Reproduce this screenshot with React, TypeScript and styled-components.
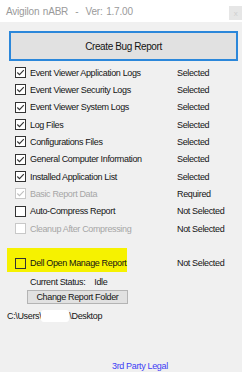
import React from "react";
import styled, { createGlobalStyle } from "styled-components";

const GlobalStyle = createGlobalStyle`
  html, body {
    margin: 0;
    padding: 0;
    background: #ffffff;
  }
  * {
    box-sizing: border-box;
  }
`;

type Item = {
  label: string;
  status: string;
  checked: boolean;
  disabled?: boolean;
};

const items: Item[] = [
  { label: "Event Viewer Application Logs", status: "Selected", checked: true },
  { label: "Event Viewer Security Logs", status: "Selected", checked: true },
  { label: "Event Viewer System Logs", status: "Selected", checked: true },
  { label: "Log Files", status: "Selected", checked: true },
  { label: "Configurations Files", status: "Selected", checked: true },
  { label: "General Computer Information", status: "Selected", checked: true },
  { label: "Installed Application List", status: "Selected", checked: true },
  { label: "Basic Report Data", status: "Required", checked: true, disabled: true },
  { label: "Auto-Compress Report", status: "Not Selected", checked: false },
  { label: "Cleanup After Compressing", status: "Not Selected", checked: false, disabled: true },
];

const Window = styled.div`
  width: 242px;
  height: 373px;
  display: flex;
  flex-direction: column;
  font-family: "Liberation Sans", Arial, sans-serif;
  font-size: 9px;
  letter-spacing: -0.35px;
  color: #141414;
  overflow: hidden;
`;

const TitleBar = styled.div`
  height: 22px;
  background: #ffffff;
  display: flex;
  align-items: center;
  justify-content: space-between;
  padding-left: 6px;
`;

const Title = styled.span`
  font-size: 10px;
  color: #9a9a9a;
  letter-spacing: -0.2px;
  word-spacing: 1px;
`;

const CloseBox = styled.div`
  width: 13px;
  height: 14px;
  margin-top: 4px;
  background: #e6e6e6;
  color: #cfcfcf;
  font-size: 8px;
  display: flex;
  align-items: center;
  justify-content: center;
`;

const Body = styled.div`
  flex: 1;
  background: #f0f0f0;
  display: flex;
  flex-direction: column;
  padding: 9px 4px 0 7px;
`;

const BigButton = styled.div`
  height: 30px;
  margin: 0 0 3px 2px;
  border: 2px solid #2b87da;
  background: #e1e1e1;
  display: flex;
  align-items: center;
  justify-content: center;
  font-size: 10px;
  letter-spacing: -0.4px;
`;

const Row = styled.div`
  height: 17.33px;
  display: grid;
  grid-template-columns: 23px 147px 1fr;
  align-items: center;
`;

const HighlightRow = styled.div`
  margin-top: 11px;
  height: 24px;
  display: grid;
  grid-template-columns: 23px 147px 1fr;
  align-items: center;
  padding-top: 6px;
  background: linear-gradient(to right, #f6f200 0, #f6f200 120px, transparent 120px);
`;

const BoxWrap = styled.div`
  display: flex;
  justify-content: flex-start;
  padding-left: 8px;
`;

const Box = styled.div<{ $disabled?: boolean; $fill?: string }>`
  width: 11px;
  height: 11px;
  border: 1px solid ${(p) => (p.$disabled ? "#c8c8c8" : "#333333")};
  background: ${(p) => p.$fill ?? "#ffffff"};
  display: flex;
  align-items: center;
  justify-content: center;
`;

const Label = styled.span<{ $disabled?: boolean }>`
  color: ${(p) => (p.$disabled ? "#a6a6a6" : "#141414")};
  white-space: nowrap;
`;

const Status = styled.span`
  white-space: nowrap;
`;

const StatusLine = styled.div`
  display: flex;
  gap: 9px;
  padding-left: 23px;
  margin-top: 3px;
  height: 13px;
  align-items: center;
`;

const SmallButton = styled.div`
  margin: 2px 0 0 20px;
  width: 101px;
  height: 14px;
  border: 1px solid #b4b4b4;
  background: #e1e1e1;
  display: flex;
  align-items: center;
  justify-content: center;
`;

const PathLine = styled.div`
  margin-top: 5px;
  height: 14px;
  display: flex;
  align-items: center;
`;

const Redact = styled.span`
  display: inline-block;
  width: 28px;
  height: 12px;
  background: #ffffff;
  border-radius: 3px;
`;

const Legal = styled.div`
  margin-top: auto;
  margin-bottom: -1px;
  padding-left: 105px;
  color: #3d3df5;
  height: 12px;
`;

const Footer = styled.div`
  position: relative;
  height: 1px;
  background: #ffffff;
`;

const Check = ({ on, disabled, fill }: { on: boolean; disabled?: boolean; fill?: string }) => (
  <BoxWrap>
    <Box $disabled={disabled} $fill={fill}>
      {on && (
        <svg width="9" height="9" viewBox="0 0 9 9">
          <polyline
            points="1.3,4.5 3.5,6.7 7.8,2.2"
            fill="none"
            stroke={disabled ? "#c0c0c0" : "#333"}
            strokeWidth="1.1"
          />
        </svg>
      )}
    </Box>
  </BoxWrap>
);

export default function App() {
  return (
    <>
      <GlobalStyle />
      <Window>
        <TitleBar>
          <Title>Avigilon nABR&nbsp; - &nbsp;Ver: 1.7.00</Title>
          <CloseBox>x</CloseBox>
        </TitleBar>
        <Body>
          <BigButton>Create Bug Report</BigButton>
          {items.map((it) => (
            <Row key={it.label}>
              <Check on={it.checked} disabled={it.disabled} />
              <Label $disabled={it.disabled}>{it.label}</Label>
              <Status>{it.status}</Status>
            </Row>
          ))}
          <HighlightRow>
            <Check on={false} fill="transparent" />
            <Label>Dell Open Manage Report</Label>
            <Status>Not Selected</Status>
          </HighlightRow>
          <StatusLine>
            <span>Current Status:</span>
            <span>Idle</span>
          </StatusLine>
          <SmallButton>Change Report Folder</SmallButton>
          <PathLine>
            C:\Users\<Redact />\Desktop
          </PathLine>
          <Legal>3rd Party Legal</Legal>
        </Body>
        <Footer />
      </Window>
    </>
  );
}
